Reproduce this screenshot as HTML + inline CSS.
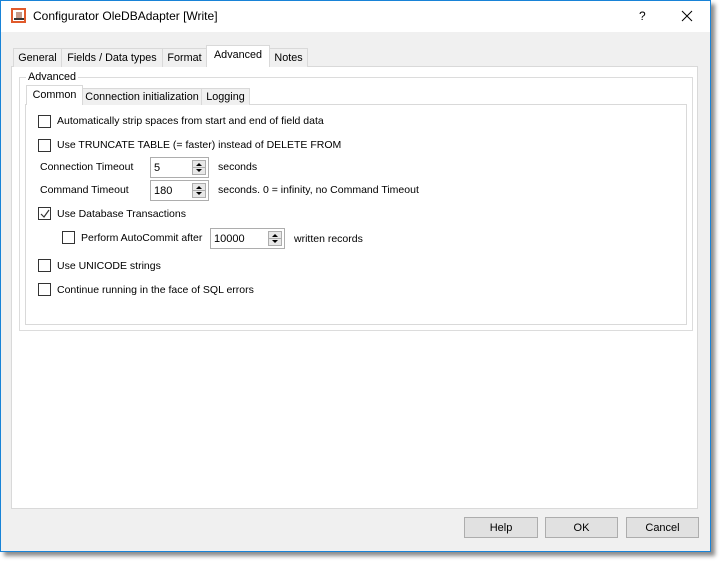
<!DOCTYPE html>
<html><head><meta charset="utf-8"><style>
*{box-sizing:border-box;margin:0;padding:0}
body{width:726px;height:567px;background:#fff;position:relative;overflow:hidden;font-family:"Liberation Sans",sans-serif;font-size:10.5px;color:#000}
.a{position:absolute}
.win{left:0;top:0;width:711px;height:552px;border:1px solid #1883d7;background:#f0f0f0;box-shadow:4px 4px 4px rgba(0,0,0,.45)}
.tb{left:1px;top:1px;width:709px;height:31px;background:#fff}
.tab{position:absolute;border:1px solid #d9d9d9;border-bottom:none;background:#f0f0f0;text-align:center;line-height:18px;white-space:nowrap;font-size:10.8px}
.sel{background:#fff;z-index:2}
.cb{position:absolute;width:13px;height:13px;border:1px solid #333;background:#fff}
.lbl{position:absolute;white-space:nowrap}
.sp{position:absolute;border:1px solid #adadad;background:#fff;height:21px;padding-left:3px;line-height:20px;font-size:11px}
.sb{position:absolute;right:2px;top:2px;width:14px;height:15px;border:1px solid #adadad;background:#e8e8e8}
.sb:before{content:"";position:absolute;left:3px;top:2px;border:3px solid transparent;border-bottom:3px solid #000;border-top:0}
.sb:after{content:"";position:absolute;left:3px;top:8px;border:3px solid transparent;border-top:3px solid #000;border-bottom:0}
.sb i{position:absolute;left:0;top:6px;width:12px;height:1px;background:#adadad}
.btn{position:absolute;top:517px;height:21px;border:1px solid #adadad;background:#e1e1e1;text-align:center;line-height:21px;font-size:11px}
</style></head><body>
<div class="a win"></div>
<div class="a tb"></div>
<div class="a" style="left:11px;top:8px;width:15px;height:15px;border:2px solid #e05a2b;background:#fff"><div class="a" style="left:3px;top:2px;width:6px;height:6px;background:#c49a8a"></div><div class="a" style="left:1px;top:8px;width:10px;height:2px;background:#333"></div></div>
<div class="lbl" style="left:33px;top:9px;font-size:12px">Configurator OleDBAdapter [Write]</div>
<div class="lbl" style="left:639px;top:9px;font-size:12px">?</div>
<svg class="a" style="left:681px;top:10px" width="12" height="12"><path d="M1 1L11 11M11 1L1 11" stroke="#000" stroke-width="1"/></svg>

<div class="a" style="left:11px;top:66px;width:687px;height:443px;border:1px solid #d9d9d9;background:#fff"></div>
<div class="tab" style="left:13px;top:48px;width:49px;height:19px">General</div>
<div class="tab" style="left:61px;top:48px;width:102px;height:19px">Fields / Data types</div>
<div class="tab" style="left:162px;top:48px;width:45px;height:19px">Format</div>
<div class="tab sel" style="left:206px;top:45px;width:64px;height:22px;line-height:19px">Advanced</div>
<div class="tab" style="left:269px;top:48px;width:39px;height:19px">Notes</div>

<div class="a" style="left:19px;top:77px;width:674px;height:254px;border:1px solid #dcdcdc"></div>
<div class="lbl" style="left:26px;top:71px;background:#fff;padding:0 2px;font-size:10.8px">Advanced</div>
<div class="a" style="left:25px;top:104px;width:662px;height:221px;border:1px solid #d9d9d9;background:#fff"></div>
<div class="tab sel" style="left:26px;top:85px;width:57px;height:20px">Common</div>
<div class="tab" style="left:82px;top:88px;width:120px;height:17px;line-height:17px">Connection initialization</div>
<div class="tab" style="left:201px;top:88px;width:49px;height:17px;line-height:17px">Logging</div>

<div class="cb" style="left:38px;top:115px"></div><div class="lbl" style="left:57px;top:115px">Automatically strip spaces from start and end of field data</div>
<div class="cb" style="left:38px;top:139px"></div><div class="lbl" style="left:57px;top:139px">Use TRUNCATE TABLE (= faster) instead of DELETE FROM</div>
<div class="lbl" style="left:40px;top:161px">Connection Timeout</div>
<div class="sp" style="left:150px;top:157px;width:59px">5<div class="sb"><i></i></div></div>
<div class="lbl" style="left:218px;top:161px">seconds</div>
<div class="lbl" style="left:40px;top:184px">Command Timeout</div>
<div class="sp" style="left:150px;top:180px;width:59px">180<div class="sb"><i></i></div></div>
<div class="lbl" style="left:218px;top:184px">seconds. 0 = infinity, no Command Timeout</div>
<div class="cb" style="left:38px;top:207px"><svg class="a" style="left:1px;top:1px" width="10" height="10"><path d="M1 5 L4 8 L9 1" stroke="#333" stroke-width="1.2" fill="none"/></svg></div><div class="lbl" style="left:57px;top:208px">Use Database Transactions</div>
<div class="cb" style="left:62px;top:231px"></div><div class="lbl" style="left:81px;top:232px">Perform AutoCommit after</div>
<div class="sp" style="left:210px;top:228px;width:75px">10000<div class="sb"><i></i></div></div>
<div class="lbl" style="left:294px;top:233px">written records</div>
<div class="cb" style="left:38px;top:259px"></div><div class="lbl" style="left:57px;top:260px">Use UNICODE strings</div>
<div class="cb" style="left:38px;top:283px"></div><div class="lbl" style="left:57px;top:284px">Continue running in the face of SQL errors</div>

<div class="btn" style="left:464px;width:74px">Help</div>
<div class="btn" style="left:545px;width:73px">OK</div>
<div class="btn" style="left:626px;width:73px">Cancel</div>
</body></html>
